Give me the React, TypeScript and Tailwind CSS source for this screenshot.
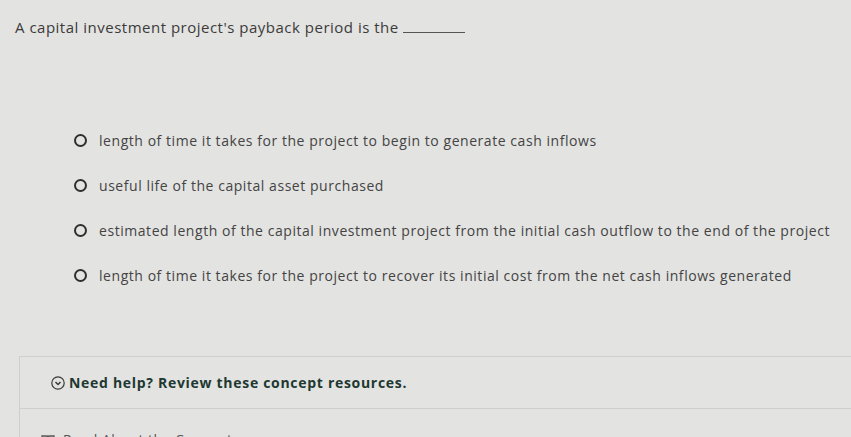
const options = [
  'length of time it takes for the project to begin to generate cash inflows',
  'useful life of the capital asset purchased',
  'estimated length of the capital investment project from the initial cash outflow to the end of the project',
  'length of time it takes for the project to recover its initial cost from the net cash inflows generated',
];

export default function App() {
  return (
    <div
      className="h-[437px] w-[851px] overflow-hidden bg-[#e3e3e1] text-[#3b3b3b]"
      style={{ fontFamily: '"Open Sans", Lato, sans-serif' }}
    >
      <p className="pl-[15px] pt-[17px] text-[15px] leading-5 tracking-[0.5px]">
        A capital investment project's payback period is the{' '}
        <span className="inline-block w-[62px] border-b border-[#555]" />
      </p>

      <ul className="mt-[93px] flex flex-col gap-[25px] pl-[74px]">
        {options.map((opt, i) => (
          <li key={i} className="flex h-5 items-center gap-[12px] text-[14px] tracking-[0.55px] text-[#444]">
            <span className="h-[13px] w-[13px] flex-shrink-0 rounded-full border-[2.5px] border-[#2f2f2f]" />
            <span className="whitespace-nowrap">{opt}</span>
          </li>
        ))}
      </ul>

      <div className="ml-[19px] mt-[71px] border-l border-t border-[#cfcfcc]">
        <div className="flex h-[52px] items-center gap-[4px] border-b border-[#cfcfcc] pl-[31px]">
          <svg width="14" height="14" viewBox="0 0 14 14" fill="none" stroke="#3a3a3a" strokeWidth="1.2">
            <circle cx="7" cy="7" r="6.2" />
            <path d="M4.5 6 L7 8.5 L9.5 6" strokeWidth="1.5" />
          </svg>
          <span className="text-[14px] font-bold tracking-[0.7px] text-[#1e3832]">
            Need help? Review these concept resources.
          </span>
        </div>
        <div className="flex items-center gap-[8px] pl-[21px] pt-[20px] text-[14px] tracking-[0.5px] text-[#555]">
          <svg width="14" height="12" viewBox="0 0 14 12" fill="none" stroke="#555" strokeWidth="1.3">
            <path d="M1 2 H6 Q7 2 7 3 V11 Q7 10 6 10 H1 Z" />
            <path d="M13 2 H8 Q7 2 7 3 V11 Q7 10 8 10 H13 Z" />
          </svg>
          <span>Read About the Concept</span>
        </div>
      </div>
    </div>
  );
}
